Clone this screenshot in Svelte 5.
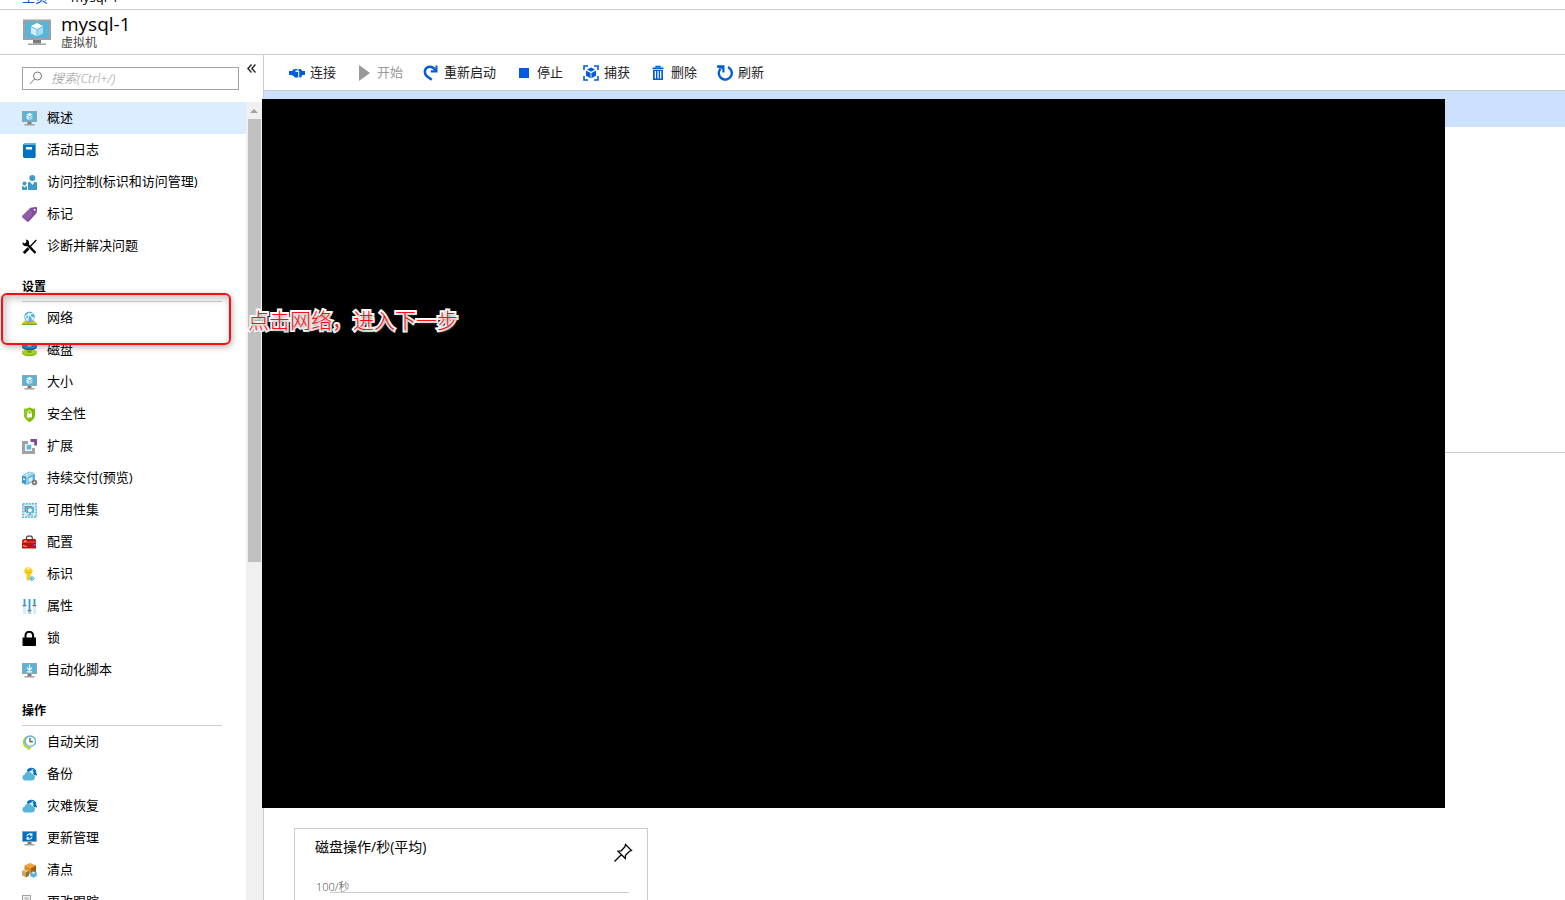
<script>
  const general = [
    { icon: 'vm', label: '概述', active: true },
    { icon: 'log', label: '活动日志' },
    { icon: 'people', label: '访问控制(标识和访问管理)' },
    { icon: 'tag', label: '标记' },
    { icon: 'tools', label: '诊断并解决问题' }
  ];
  const groups = [
    {
      title: '设置',
      items: [
        { icon: 'network', label: '网络', marked: true },
        { icon: 'disks', label: '磁盘' },
        { icon: 'vm', label: '大小' },
        { icon: 'shield', label: '安全性' },
        { icon: 'extension', label: '扩展' },
        { icon: 'delivery', label: '持续交付(预览)' },
        { icon: 'availability', label: '可用性集' },
        { icon: 'toolbox', label: '配置' },
        { icon: 'key', label: '标识' },
        { icon: 'sliders', label: '属性' },
        { icon: 'lock', label: '锁' },
        { icon: 'script', label: '自动化脚本' }
      ]
    },
    {
      title: '操作',
      items: [
        { icon: 'clock', label: '自动关闭' },
        { icon: 'cloud', label: '备份' },
        { icon: 'cloud', label: '灾难恢复' },
        { icon: 'update', label: '更新管理' },
        { icon: 'inventory', label: '清点' },
        { icon: 'changes', label: '更改跟踪' }
      ]
    }
  ];
  const commands = [
    { icon: 'connect', label: '连接' },
    { icon: 'start', label: '开始', disabled: true },
    { icon: 'restart', label: '重新启动' },
    { icon: 'stop', label: '停止' },
    { icon: 'capture', label: '捕获' },
    { icon: 'delete', label: '删除' },
    { icon: 'refresh', label: '刷新' }
  ];
  let query = $state('');
</script>

{#snippet screen(fill)}
  <path fill="#a0a1a2" d="M0 0h15v11H0z" />
  <path fill={fill} d="M1 1h13v9H1z" />
  <path fill="#7a7a7a" d="M5.500 11h4v2h-4z" />
  <path fill="#a0a1a2" d="M2.500 13h10v1.500h-10z" />
{/snippet}

{#snippet icon(name)}
  <svg class="icon" viewBox="0 0 16 16" aria-hidden="true">
    {#if name === 'vm'}
      {@render screen('#59b4d9')}
      <path fill="#fff" d="M7.500 1.900 10.500 3.400 7.500 4.900 4.500 3.400z" />
      <path fill="#d5edf7" d="M4.500 4 7.300 5.400v3.900L4.500 7.800z" />
      <path fill="#a9daee" d="M10.500 4 7.700 5.400v3.900l2.800-1.500z" />
    {:else if name === 'log'}
      <path fill="#005ba1" d="M1 2 2.500.500H14v13L12.500 15H2z" />
      <path fill="#59b4d9" d="M2.500.500H14v13l-1 1V2H1z" />
      <path fill="#0072c6" d="M1 2h11.500v13H2l-1-1z" />
      <path fill="#fff" d="M4 4h6v2.500H4z" />
    {:else if name === 'people'}
      <g fill="#3e9bc4">
        <circle cx="10.300" cy="3" r="3" />
        <path d="M6 15V8.500c0-1 .6-1.800 1.600-1.800h.5l2.300 3.300 2.200-3.300h.7c1 0 1.700.8 1.700 1.800V15z" />
        <circle cx="2.500" cy="8.500" r="2" />
        <path d="M0 15v-2.700c0-.8.500-1.200 1.200-1.200l1.300 1.600 1.300-1.600c.8 0 1.200.4 1.200 1.200V15z" />
      </g>
    {:else if name === 'tag'}
      <path fill="#804998" d="M8.500.800 13.500 0c1.200 0 1.700.5 1.600 1.500L14.600 6 7 14.300c-.6.700-1.500.7-2.100.1L.6 10.500c-.6-.6-.6-1.300 0-1.900z" />
      <path fill="#9b6bb0" d="M8.500.800.6 8.600c-.6.600-.6 1.300 0 1.900l4.300 3.900L10.500 8z" opacity=".6" />
      <circle cx="12.600" cy="2.800" r="1" fill="#fff" />
    {:else if name === 'tools'}
      <path fill="none" stroke="#000" stroke-width="2.400" d="m4.300 4.300 9.200 9.700" />
      <path fill="#000" d="M.5 3.200 2.700 4.500 4.500 3 3.800.500C6.500.600 7.700 3 6.800 5.500L4.800 7.300C2.300 7.500.2 6 .5 3.200z" />
      <path fill="none" stroke="#000" stroke-width="1.300" d="M14.300 1 7.500 8.200" />
      <path fill="none" stroke="#000" stroke-width="2.800" d="m6.500 9.200-4.700 4.900" />
    {:else if name === 'network'}
      <path fill="#b8d432" d="M2.500 9.500h10L15 13H0z" />
      <path fill="#7fa21f" d="M0 12.700h15V14H0z" />
      <path fill="#f78d1e" d="M4 11.300h7v.8H4z" />
      <circle cx="7.500" cy="5.800" r="5.300" fill="#59b4d9" />
      <path fill="none" stroke="#fff" stroke-width="1" d="m3 5.500 4-2.300 4 4.300M7 3.200 5.500 9.500M7 3.200l4-.7M3 5.500l2.500 4" />
      <g fill="#fff"><circle cx="7" cy="3.200" r="1.200" /><circle cx="10.800" cy="7.500" r="1.200" /><circle cx="5.500" cy="8.800" r="1" /></g>
    {:else if name === 'disks'}
      <ellipse cx="7.500" cy="10" rx="7.500" ry="3.200" fill="#7fba00" />
      <ellipse cx="7.500" cy="9" rx="7.500" ry="2.800" fill="#a8d22c" />
      <ellipse cx="7.500" cy="8.800" rx="2.500" ry=".9" fill="#6a9a00" />
      <ellipse cx="7.500" cy="4" rx="7.500" ry="3.200" fill="#005ba1" />
      <ellipse cx="7.500" cy="3" rx="7.500" ry="2.700" fill="#3595d3" />
      <ellipse cx="7.500" cy="2.800" rx="2.500" ry=".9" fill="#9fd5ee" />
    {:else if name === 'shield'}
      <path fill="#7fba00" d="M7.500.300c1.700 1.200 3.500 1.500 5.500 1.500v6.500c0 3-2.500 5-5.500 6.900C4.500 13.300 2 11.300 2 8.300V1.800c2 0 3.800-.3 5.500-1.500z" />
      <path fill="#99ce32" d="M7.500.300v14.900C4.500 13.300 2 11.300 2 8.300V1.800c2 0 3.800-.3 5.500-1.500z" opacity=".6" />
      <path fill="#fff" d="M5 6.500h5v4H5z" />
      <path fill="none" stroke="#fff" d="M6 7V5.200a1.500 1.500 0 0 1 3 0V7" />
    {:else if name === 'extension'}
      <path fill="#a0a1a2" d="M0 2h6v3H3v7h7V9h3v6H0z" />
      <path fill="#804998" d="M8.500 0H15v6.500h-2.800V3H8.500z" />
      <path fill="#d5edf7" d="M3.500 5h6.500v6.500H3.500z" />
      <path fill="#59b4d9" d="M4.800 6.200H9v4.200H4.800z" />
    {:else if name === 'delivery'}
      <path fill="#7fc5e4" d="m0 4 7-3.500L13 2 6 5z" />
      <path fill="#3e9bc4" d="m0 4.500 4.500 1V14L0 12z" />
      <path fill="#59b4d9" d="M5.300 6 13 2.600v6.500L5.300 14z" />
      <path fill="#fff" d="m3 3.500 6-2 .8.400-6 2.300zM1 7.200l2 .6v1.400l-2-.6z" />
      <path fill="#d5edf7" d="m6.500 7.500 4-1.700v4l-4 2z" />
      <circle cx="12.500" cy="11.500" r="2.700" fill="#7a7a7a" />
      <circle cx="12.500" cy="11.500" r="1" fill="#ddd" />
    {:else if name === 'availability'}
      <path fill="#d5edf7" d="M1 1h13v13H1z" />
      <rect x=".8" y=".8" width="13.400" height="13.400" fill="none" stroke="#59b4d9" stroke-width="1.500" stroke-dasharray="2 1" />
      <path fill="#8b8c8d" d="M2.500 3h8v6h-8z" />
      <path fill="#59b4d9" d="M4 4h8v6H4z" />
      <path fill="#fff" d="m8 5.200 1.800 1v2L8 9.200l-1.800-1v-2z" />
      <path fill="#a0a1a2" d="M7 10h2v1.500H7zM5 11.500h6v1H5z" />
    {:else if name === 'toolbox'}
      <path fill="none" stroke="#4a4a4a" stroke-width="1.300" d="M4.500 4.500V2.300L5.500 1.200h3.800l1 1.100v2.200" />
      <path fill="#ba141a" d="M1.500 4h11.500l1 1v8.500H0V5.500z" />
      <path fill="#e8453c" d="M0 6.500h14v1.200H0z" />
      <path fill="#f7b83a" d="M2 5.500h2.500V7H2zM1 10l4 1.200v.8l-4-.7z" />
      <path fill="#8d4fa3" d="M11.500 9h2.500v2h-2.500z" />
    {:else if name === 'key'}
      <path fill="#fcd116" d="M6.300 0 9.200 1.300 11 4.200 8.600 7.800V9.500l-1 1 1 1-1 1L6.300 14 4.500 12.500V7.800L2 4.200 3.400 1.300z" />
      <path fill="#fff" d="M5 1.300h2.800v1H5z" />
      <path fill="#f0a30a" d="M3.500 5h6v.8h-6z" />
      <path fill="#59b4d9" d="m9.700 8.500 3.300 3-3.300 3-3.200-3z" />
      <path fill="none" stroke="#d5edf7" stroke-width=".7" d="m9.700 9.700 2 1.800-2 1.800-2-1.800z" />
    {:else if name === 'sliders'}
      <path fill="#9fd5ee" d="M1 0h3v15H1zM6 0h3v15H6zM11 0h3v15h-3z" />
      <path fill="#d5edf7" d="M1 7h3v8H1zM11 7h3v8h-3z" />
      <path fill="#3e9bc4" d="M2 0h1v6H2zM7 0h1v11H7zM12 0h1v6h-1z" />
      <path fill="#7a7a7a" d="M.5 6h4v1.200h-4zM5.500 11h4v1.200h-4zM10.500 6h4v1.200h-4z" />
    {:else if name === 'lock'}
      <path d="M.5 6.500H14V14c0 .6-.4 1-1 1H1.500c-.6 0-1-.4-1-1z" />
      <path fill="none" stroke="#000" stroke-width="2" d="M3.500 7.500v-3a3.800 3.800 0 0 1 7.600 0v3" />
    {:else if name === 'script'}
      {@render screen('#59b4d9')}
      <path fill="none" stroke="#fff" stroke-width="1.200" d="M7.500 1.500V7M5 4.700l2.500 2.500L10 4.700M4.800 8.800h5.400" />
    {:else if name === 'clock'}
      <path fill="#b8d432" d="M6 .800C2.700 1.500.8 4 .8 7.200c0 3.300 2 5.800 5 6.400V15.500l4-2.700-3.200-1.300C3.800 11 2.800 9.300 2.800 7c0-2.400 1.200-4.500 3.200-6.200z" />
      <circle cx="8.300" cy="6.200" r="5.200" fill="#fff" stroke="#59b4d9" stroke-width="1.400" />
      <path fill="none" stroke="#333" stroke-width="1.100" d="M8 2.800V6.700h3" />
    {:else if name === 'cloud'}
      <path fill="#0072c6" d="M4.500 4C5.500 1.200 8.500 0 11 1c1.500.2 3.500 2 3.300 4.700l.8 2.800-2.700-.5-2-2.300 1.500-.3C11 3.200 8 3.200 7 5.200z" />
      <path fill="#fff" d="m9.500 2.200 2.300.3-1.800 1.600z" />
      <path fill="#59b4d9" d="M3 13.500a3 3 0 0 1-.3-5.900c.5-2 2-3 3.800-3 1.600 0 2.900.9 3.500 2.300 2 .1 3 1.500 3 3.200 0 2-1.300 3.400-3.200 3.400z" />
    {:else if name === 'update'}
      {@render screen('#0072c6')}
      <path fill="none" stroke="#fff" stroke-width="1.100" d="M5 5.200A2.600 2.600 0 0 1 9.700 4M10 5.800a2.600 2.600 0 0 1-4.700 1.300M9.900 2.200v2h-2M5.100 8.800v-2h2" />
    {:else if name === 'inventory'}
      <path fill="#f2a33c" d="m2.500 2.500 5.500-2.500 6 2.300-5 2.700z" />
      <path fill="#e08a20" d="m2.500 2.500 6.500 2.500v6.500L2.500 9z" />
      <path fill="#a85a0c" d="M14 2.300v7.200l-5 2V5z" />
      <path fill="#dcc48a" d="m0 7.500 3-1.300 4 1.500-3 1.800z" />
      <path fill="#c2a565" d="m0 7.500 4 2v5l-4-2.200z" />
      <path fill="#8f7235" d="M7 7.700v5L4 14.500v-5z" />
      <path fill="#59b4d9" d="m11.300 8 3.500 1.500v3.500l-3.500 1.700-3-1.700V9.500z" />
      <path fill="#fff" d="m11.500 9 1.800.8-1.800.9-1.800-.9z" />
    {:else if name === 'changes'}
      <path fill="#a0a1a2" d="M0 0h9v14.500H0z" />
      <path fill="#f0f0f0" d="M1 1h7v12.500H1z" />
      <path fill="#a0a1a2" d="M2.500 2.500h4v1h-4zM2.500 4.500h4v1h-4z" />
    {:else if name === 'connect'}
      <path fill="#015cda" d="M0 6h3.500V4.500H5L6 4h2.500v1.500H6.500V7h2.700v5.500H6L4.500 11H3.500V10H0z" />
      <path fill="#015cda" d="M9.500 4h2L13 5.500V6h3v4h-3v1.200L11.500 12.500H10.200V6H9.500z" />
    {:else if name === 'start'}
      <path fill="#999" d="M3 0 14 8 3 16z" />
    {:else if name === 'restart'}
      <path fill="none" stroke="#015cda" stroke-width="2.400" d="M8.800 14.800 4 11.300C.3 8 1.500 2.200 6.500 1.700 9 1.500 11 2.800 12.600 5.300" />
      <path fill="#015cda" d="M14.500.500V7.500H7.800V5.300H12.500V.500z" />
    {:else if name === 'stop'}
      <path fill="#015cda" d="M3 3h10v10H3z" />
    {:else if name === 'capture'}
      <path fill="none" stroke="#015cda" stroke-width="1.600" d="M1 5V1h4M11 1h4v4M15 11v4h-4M5 15H1v-4" />
      <path fill="#015cda" d="m8 2.500 4 2-4 2.200-4-2.200zM3 5.500l4.600 2.600v5.200L3 10.800zM13 5.500 8.400 8.100v5.200l4.600-2.500z" />
    {:else if name === 'delete'}
      <path fill="none" stroke="#015cda" stroke-width="1.300" d="M6 2.800V1.500h4v1.300" />
      <path fill="#015cda" d="M2.500 2.500h11v1.700h-11zM3 5h10v10H3z" />
      <path fill="#fff" d="M4.700 6h1.300v7.500H4.700zM7.400 6h1.300v7.500H7.400zM10 6h1.300v7.500H10z" />
    {:else if name === 'refresh'}
      <path fill="none" stroke="#015cda" stroke-width="2.400" d="M11 2.200A6.500 6.500 0 1 1 3.500 3.700" />
      <path fill="#015cda" d="M0 .300H7.500V7.500H5.300V4L0 2.500z" />
    {/if}
  </svg>
{/snippet}

{#snippet entry(item)}
  <li class:marked={item.marked}>
    <a class="entry" class:active={item.active} href="#blade" aria-current={item.active ? 'page' : undefined}>
      {@render icon(item.icon)}<span>{item.label}</span>
    </a>
    {#if item.marked}
      <span class="frame"></span>
      <strong class="note">点击网络，进入下一步</strong>
    {/if}
  </li>
{/snippet}

<div class="page">
  <nav class="crumbs"><a href="#home">主页</a><span>mysql-1</span></nav>

  <header>
    <svg class="logo" viewBox="0 0 30 30" aria-hidden="true">
      <path fill="#a0a1a2" d="M1 2.500h28V23H1z" />
      <path fill="#59b4d9" d="M3 4.500h24v16.500H3z" />
      <path fill="#7a7a7a" d="M11 23h8v3.500h-8z" />
      <path fill="#a0a1a2" d="M6 26.500h18V28H6z" />
      <path fill="#fff" d="m15 6 6 3-6 3-6-3z" />
      <path fill="#d5edf7" d="m9 10 5.600 2.700v6.600L9 16.500z" />
      <path fill="#a9daee" d="m21 10-5.600 2.700v6.600l5.600-2.800z" />
      <circle cx="15" cy="3.500" r=".7" fill="#b8d432" />
    </svg>
    <div>
      <h1>mysql-1</h1>
      <p>虚拟机</p>
    </div>
  </header>

  <div class="body">
    <aside>
      <div class="finder">
        <label class="search">
          <svg viewBox="0 0 14 14" aria-hidden="true"><circle cx="8.500" cy="5" r="4" /><path d="m5.600 8-4.600 4.800" /></svg>
          <input type="text" aria-label="搜索" placeholder="搜索(Ctrl+/)" bind:value={query} />
        </label>
        <button class="collapse" aria-label="折叠菜单">
          <svg viewBox="0 0 8 8" aria-hidden="true"><path d="M4 .500.800 4 4 7.500M7.500.500 4.300 4l3.200 3.500" /></svg>
        </button>
      </div>
      <div class="menu">
        <nav>
          <ul>{#each general as item}{@render entry(item)}{/each}</ul>
          {#each groups as group}
            <h2>{group.title}</h2>
            <ul>{#each group.items as item}{@render entry(item)}{/each}</ul>
          {/each}
        </nav>
        <div class="track">
          <svg viewBox="0 0 8 4" aria-hidden="true"><path d="M4 0 8 4H0z" /></svg>
          <div class="thumb"></div>
        </div>
      </div>
    </aside>

    <main>
      <div class="toolbar">
        {#each commands as command}
          <button disabled={command.disabled}>{@render icon(command.icon)}<span>{command.label}</span></button>
        {/each}
      </div>
      <div class="banner"></div>
      <section class="essentials"></section>
      <section class="charts">
        <article>
          <div class="title">
            <h3>磁盘操作/秒(平均)</h3>
            <button class="pin" aria-label="固定">
              <svg viewBox="0 0 20 20" aria-hidden="true"><path d="M12.500 1.500 18.500 7.500 16.500 8.200 12.500 12.200 12.300 15.500 5 8.200 8.200 7.800 12 3.700zM8.300 11.700 1.500 18.500" /></svg>
            </button>
          </div>
          <div class="axis">100/秒</div>
        </article>
      </section>
      <div class="cover"></div>
    </main>
  </div>
</div>

<style>
  :global(body) { margin: 0; overflow: hidden; }
  .page {
    display: flex;
    flex-direction: column;
    height: 100vh;
    overflow: hidden;
    background: #fff;
    color: #000;
    font: 13px/18px "Open Sans", "Noto Sans CJK SC", sans-serif;
  }
  h1, h2, h3, p, ul { margin: 0; padding: 0; }
  ul { list-style: none; }
  button { border: 0; padding: 0; background: none; font: inherit; color: inherit; }
  a { color: inherit; text-decoration: none; }
  svg { display: block; flex: none; }
  .icon { width: 16px; height: 16px; }

  .crumbs {
    display: flex;
    align-items: flex-end;
    flex: none;
    gap: 23px;
    height: 6px;
    padding: 0 22px 3px;
    border-bottom: 1px solid #ccc;
    overflow: hidden;
  }
  .crumbs a { color: #015cda; }

  header {
    display: flex;
    align-items: flex-start;
    flex: none;
    gap: 9px;
    height: 41px;
    padding: 3px 22px 0;
    border-bottom: 1px solid #ccc;
  }
  .logo { width: 30px; height: 30px; margin-top: 4px; }
  h1 { font-size: 19px; line-height: 22px; font-weight: 500; }
  header p { font-size: 12px; line-height: 16px; color: #444; }

  .body { display: flex; flex: 1; min-height: 0; }
  header { box-sizing: border-box; height: 45px; }
  aside {
    display: flex;
    flex-direction: column;
    flex: none;
    width: 263px;
    border-right: 1px solid #ccc;
  }
  .finder { display: flex; align-items: flex-start; gap: 8px; padding: 12px 7px 12px 22px; }
  .search {
    display: flex;
    flex: 1;
    gap: 8px;
    height: 21px;
    padding: 0 6px;
    border: 1px solid #a0a1a2;
  }
  .search svg { width: 14px; height: 14px; margin-top: 3px; fill: none; stroke: #777; }
  .search input {
    flex: 1;
    min-width: 0;
    height: 19px;
    padding: 0;
    border: 0;
    outline: 0;
    background: none;
    font: inherit;
  }
  .search input::placeholder { color: #999; font-style: italic; font-weight: 300; opacity: 1; }
  .collapse { margin-top: -3px; }
  .collapse svg { width: 9px; height: 9px; fill: none; stroke: #222; stroke-width: 1.2; }

  .menu { display: flex; flex: 1; min-height: 0; }
  .menu nav { flex: 1; min-width: 0; }
  .entry { display: flex; gap: 9px; height: 32px; padding-left: 22px; line-height: 30px; white-space: nowrap; }
  .entry .icon { margin-top: 9px; }
  .active { background: #dbeeff; }
  h2 {
    height: 32px;
    margin: 0 24px 0 22px;
    padding-top: 7px;
    border-bottom: 1px solid #ccc;
    font-size: 12px;
    line-height: 36px;
    font-weight: 600;
  }
  .track { flex: none; width: 17px; background: #f0f0f0; }
  .track svg { width: 8px; height: 4px; margin: 7px 5px 6px 4px; fill: #a0a1a2; }
  .thumb { height: 443px; margin: 0 2px; background: #c1c1c1; }

  .marked { position: relative; }
  .frame {
    position: absolute;
    inset: -9px 15px -11px 1px;
    z-index: 2;
    border: 2px solid #fb0d12;
    border-radius: 6px;
    box-shadow: 1px 2px 6px rgba(0, 0, 0, .3), inset 2px 3px 9px rgba(0, 0, 0, .25);
    pointer-events: none;
  }
  .note {
    position: absolute;
    left: 248px;
    top: 3px;
    z-index: 3;
    color: #fb0d12;
    font-size: 21px;
    line-height: 30px;
    font-weight: 300;
    white-space: nowrap;
    -webkit-text-stroke: 4px #fff;
    paint-order: stroke fill;
    text-shadow: 1px 2px 3px #777;
  }

  main { position: relative; flex: 1; min-width: 0; }
  .toolbar {
    display: flex;
    align-items: center;
    gap: 20px;
    height: 35px;
    padding-left: 25px;
    border-bottom: 1px solid #ccc;
  }
  .toolbar button { display: flex; align-items: center; gap: 5px; color: #222; }
  .toolbar button:disabled { color: #999; }
  .toolbar span { padding-bottom: 2px; }
  .banner { height: 36px; background: #cce0ff; }
  .essentials { height: 325px; border-bottom: 1px solid #ccc; }
  .charts { padding: 375px 30px 0; }
  article { width: 318px; height: 220px; padding: 8px 14px 0 20px; border: 1px solid #ccc; }
  .title { display: flex; justify-content: space-between; }
  h3 { font-size: 14px; line-height: 20px; font-weight: 400; }
  .pin { padding: 6px 0 0; }
  .pin svg { width: 20px; height: 20px; fill: none; stroke: #000; stroke-width: 1.3; }
  .axis {
    height: 20px;
    margin: 9px 4px 0 0;
    padding: 1px 0 0 1px;
    font-size: 11px;
    line-height: 28px;
    font-weight: 300;
    color: #444;
    background: linear-gradient(#ccc, #ccc) right bottom / 299px 1px no-repeat;
  }
  .cover { position: absolute; top: 44px; left: -2px; right: 120px; height: 709px; background: #000; }
</style>
